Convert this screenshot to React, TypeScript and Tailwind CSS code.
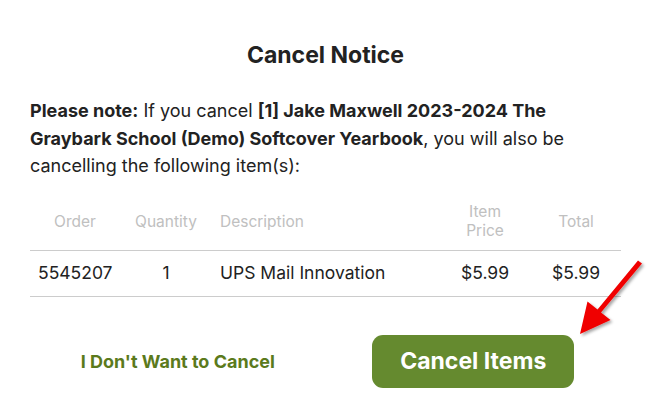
import React from "react";

const rows = [
  { order: "5545207", qty: "1", description: "UPS Mail Innovation", price: "$5.99", total: "$5.99" },
];

function Arrow() {
  // red annotation arrow pointing to the confirm button
  return (
    <svg
      className="pointer-events-none absolute left-0 top-0"
      width="651"
      height="419"
      viewBox="0 0 651 419"
    >
      <defs>
        <filter id="shadow" x="-20%" y="-20%" width="140%" height="140%">
          <feDropShadow dx="2" dy="2" stdDeviation="1.5" floodColor="#000" floodOpacity="0.35" />
        </filter>
      </defs>
      <polygon
        filter="url(#shadow)"
        fill="#f00000"
        points="642,263.5 638,260.5 597.5,309.5 587.5,301.5 580,334 610.5,320 601,312.5"
      />
    </svg>
  );
}

export default function App() {
  return (
    <div
      className="relative h-[419px] w-[651px] overflow-hidden bg-white text-[#222222]"
      style={{ fontFamily: "Inter, 'Noto Sans', sans-serif" }}
    >
      <div className="px-[30px] pt-[40px]">
        <h1 className="text-center text-[23px] font-bold leading-[30px]">Cancel Notice</h1>

        <p className="mt-[27px] text-[18px] leading-[27.5px]">
          <span className="font-bold">Please note:</span> If you cancel{" "}
          <span className="font-bold">[1] Jake Maxwell 2023-2024 The Graybark School (Demo) Softcover Yearbook</span>,
          you will also be cancelling the following item(s):
        </p>

        <table className="mt-[13px] w-full table-fixed border-collapse text-[15.5px]">
          <thead>
            <tr className="h-[58px] border-b border-[#cccccc] text-[#c0c0c0]">
              <th className="w-[90px] px-2 font-normal">Order</th>
              <th className="w-[92px] px-1 font-normal">Quantity</th>
              <th className="px-2 text-left font-normal">Description</th>
              <th className="w-[92px] px-[14px] font-normal leading-[19px]">Item Price</th>
              <th className="w-[90px] px-2 font-normal">Total</th>
            </tr>
          </thead>
          <tbody>
            {rows.map((row) => (
              <tr key={row.order} className="h-[46px] border-b border-[#cccccc] text-[17.5px]">
                <td className="px-2 text-center">{row.order}</td>
                <td className="px-1 text-center">{row.qty}</td>
                <td className="px-2">{row.description}</td>
                <td className="px-2 text-center">{row.price}</td>
                <td className="px-2 text-center">{row.total}</td>
              </tr>
            ))}
          </tbody>
        </table>

        <div className="mt-[38px] grid grid-cols-2 items-center">
          <div className="flex justify-center">
            <button className="text-[18px] font-bold text-[#5b7a1c]">I Don't Want to Cancel</button>
          </div>
          <div className="flex justify-center">
            <button className="h-[53px] w-[202px] rounded-[11px] bg-[#658a2f] text-[23px] font-bold text-white">
              Cancel Items
            </button>
          </div>
        </div>
      </div>
      <Arrow />
    </div>
  );
}
